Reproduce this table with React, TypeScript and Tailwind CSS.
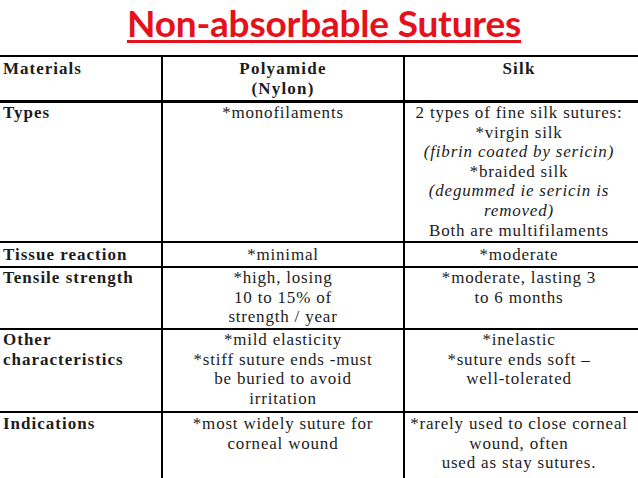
const rows = [
  {
    label: ["Types"],
    h: "h-[140px]",
    pt: "pt-0",
    nylon: ["*monofilaments"],
    silk: [
      { t: "2 types of fine silk sutures:" },
      { t: "*virgin silk" },
      { t: "(fibrin coated by sericin)", i: true },
      { t: "*braided silk" },
      { t: "(degummed ie sericin is", i: true },
      { t: "removed)", i: true },
      { t: "Both are multifilaments" },
    ],
  },
  {
    label: ["Tissue reaction"],
    h: "h-[25px]",
    pt: "pt-[2px]",
    nylon: ["*minimal"],
    silk: [{ t: "*moderate" }],
  },
  {
    label: ["Tensile strength"],
    h: "h-[62px]",
    pt: "pt-0",
    nylon: ["*high, losing", "10 to 15% of", "strength / year"],
    silk: [{ t: "*moderate, lasting 3" }, { t: "to 6 months" }],
  },
  {
    label: ["Other", "characteristics"],
    h: "h-[83px]",
    pt: "pt-0",
    nylon: ["*mild elasticity", "*stiff suture ends -must", "be buried to avoid", "irritation"],
    silk: [{ t: "*inelastic" }, { t: "*suture ends soft –" }, { t: "well-tolerated" }],
  },
  {
    label: ["Indications"],
    h: "h-[70px]",
    pt: "pt-[1px]",
    nylon: ["*most widely suture for", "corneal wound"],
    silk: [{ t: "*rarely used to close corneal" }, { t: "wound, often" }, { t: "used as stay sutures." }],
  },
]

export default function App() {
  return (
    <div className="w-[638px] h-[478px] overflow-hidden bg-white">
      <div className="h-[55px] flex justify-center pt-[1px] pl-[10px]">
        <h1 className="font-[Lato] font-bold text-[37px] leading-[44px] text-[#e5111b] underline decoration-[3px] underline-offset-[3px] tracking-[-0.2px]">
          Non-absorbable Sutures
        </h1>
      </div>
      <div className="font-[Liberation_Serif,Times_New_Roman,serif] text-[17px] leading-[19.6px] text-[#1c1c1c] border-t-2 border-black grid grid-cols-[163px_242px_233px]">
        <div className="h-[46px] border-b-[3px] border-r-2 border-black pl-[3px] pt-[2px] font-bold tracking-[1px]">
          Materials
        </div>
        <div className="h-[46px] border-b-[3px] border-r-2 border-black pt-[2px] text-center font-bold tracking-[1.2px]">
          <div>Polyamide</div>
          <div>(Nylon)</div>
        </div>
        <div className="h-[46px] border-b-[3px] border-black pt-[2px] pr-[5px] text-center font-bold tracking-[1.2px]">
          Silk
        </div>
        {rows.map((r, idx) => (
          <div key={idx} className="contents">
            <div className={"border-b-2 border-r-2 border-black pl-[3px] font-bold tracking-[1px] " + r.h + " " + r.pt}>
              {r.label.map((l) => (
                <div key={l}>{l}</div>
              ))}
            </div>
            <div className={"border-b-2 border-r-2 border-black text-center tracking-[0.8px] " + r.h + " " + r.pt}>
              {r.nylon.map((l) => (
                <div key={l}>{l}</div>
              ))}
            </div>
            <div className={"border-b-2 border-black pr-[5px] text-center tracking-[0.8px] " + r.h + " " + r.pt}>
              {r.silk.map((l) => (
                <div key={l.t} className={l.i ? "italic" : ""}>
                  {l.t}
                </div>
              ))}
            </div>
          </div>
        ))}
      </div>
    </div>
  )
}
